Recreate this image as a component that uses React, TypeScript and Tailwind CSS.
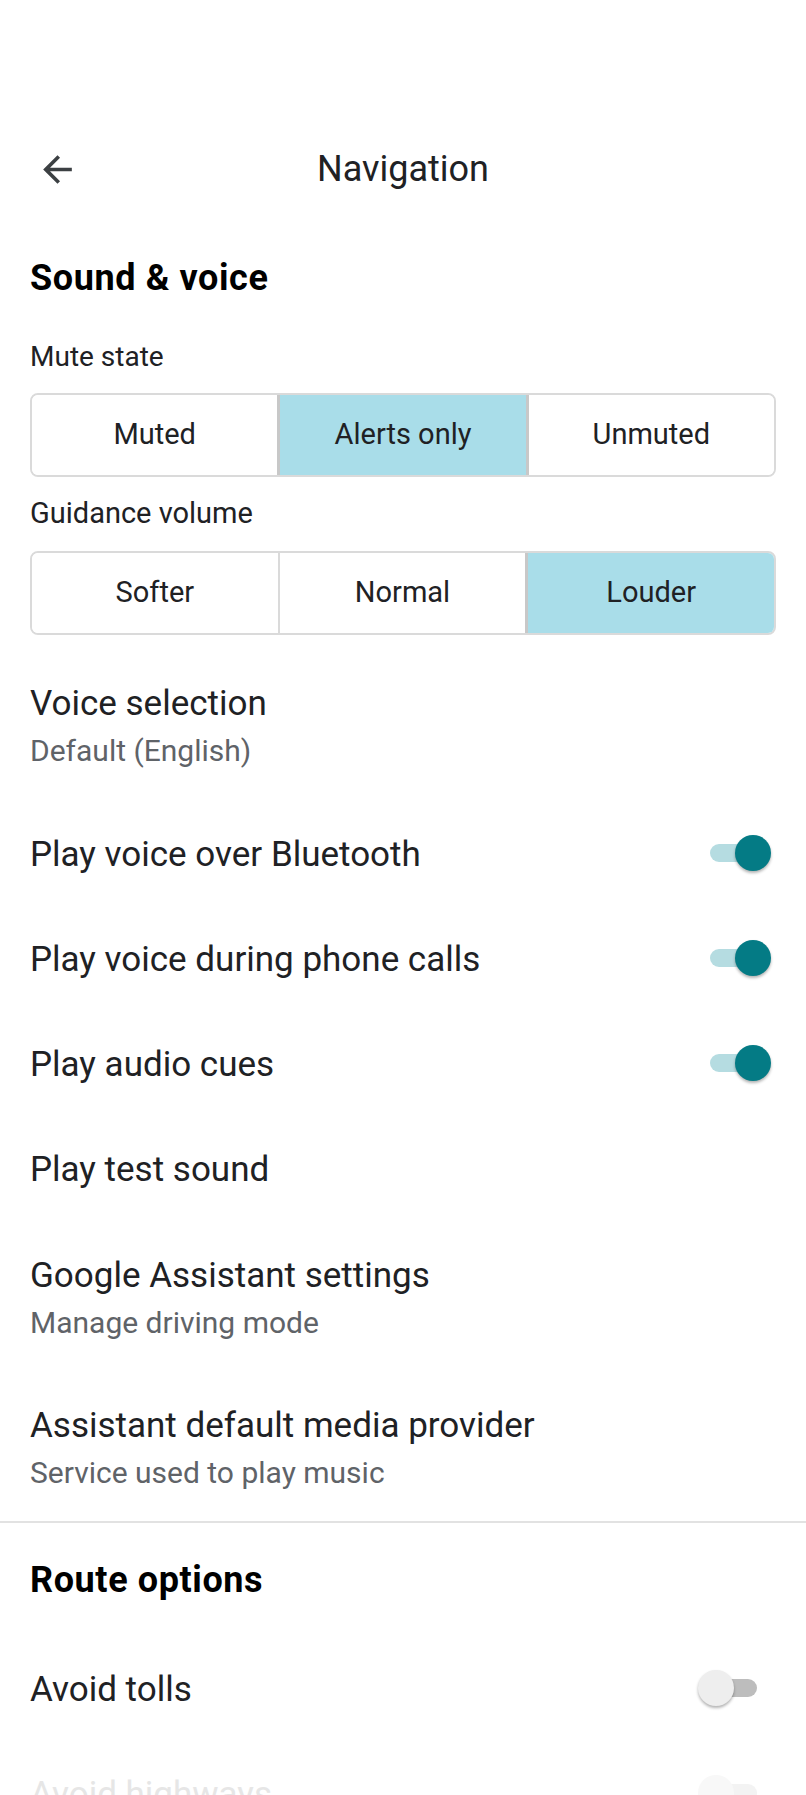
import React from "react";

const font = "font-['Roboto','Liberation_Sans',sans-serif]";

function BackArrow() {
  return (
    <svg width="43" height="43" viewBox="0 0 24 24" fill="#3c4043">
      <path d="M20 11H7.83l5.59-5.59L12 4l-8 8 8 8 1.41-1.41L7.83 13H20v-2z" />
    </svg>
  );
}

function Toggle({ on, faded = false }: { on: boolean; faded?: boolean }) {
  const track = faded ? "bg-[#f3f3f3]" : on ? "bg-[#b5dce1]" : "bg-[#bdbdbd]";
  const thumb = faded
    ? "bg-[#f8f8f8]"
    : on
      ? "bg-[#047b85] shadow-[0_2px_3px_rgba(0,0,0,0.3)]"
      : "bg-[#eeeeee] shadow-[0_2px_3px_rgba(0,0,0,0.3)]";
  return (
    <div className="relative h-[36px] w-[74px] shrink-0">
      <div className={`absolute left-[12px] top-[9px] h-[18px] w-[47px] rounded-full ${track}`} />
      <div className={`absolute top-0 h-[36px] w-[36px] rounded-full ${thumb} ${on ? "left-[37px]" : "left-0"}`} />
    </div>
  );
}

function Segmented({ items, selected }: { items: string[]; selected: number }) {
  return (
    <div className="mx-[30px] flex h-[84px] overflow-hidden rounded-[8px] border-2 border-[#dadada]">
      {items.map((label, i) => (
        <div
          key={label}
          className={`flex flex-1 items-center justify-center text-[29px] text-[#202124] ${
            i > 0 ? (i === selected || i - 1 === selected ? "border-l-[3px] border-[#c8c8c8]" : "border-l-2 border-[#dadada]") : ""
          } ${i === selected ? "bg-[#a9dde9]" : "bg-white"}`}
        >
          {label}
        </div>
      ))}
    </div>
  );
}

function ToggleRow({ label, on }: { label: string; on: boolean }) {
  return (
    <div className="flex h-[105px] items-center justify-between pl-[30px] pr-[34px]">
      <span className="mt-[6px] text-[35px] text-[#202124]">{label}</span>
      <Toggle on={on} />
    </div>
  );
}

function TwoLine({ title, sub, pt, pb }: { title: string; sub: string; pt: string; pb: string }) {
  return (
    <div className={`px-[30px] ${pt} ${pb}`}>
      <div className="text-[35px] leading-[44px] text-[#202124]">{title}</div>
      <div className="mt-[3px] text-[30px] leading-[44px] text-[#5f6368]">{sub}</div>
    </div>
  );
}

export default function App() {
  return (
    <div className={`h-[1795px] w-[806px] overflow-hidden bg-white ${font}`}>
      <div className="h-[112px]" />

      {/* Toolbar */}
      <div className="grid h-[114px] grid-cols-[1fr_auto_1fr] items-center">
        <div className="pl-[36px]">
          <BackArrow />
        </div>
        <div className="text-[36px] text-[#202124]">Navigation</div>
        <div />
      </div>

      {/* Sound & voice */}
      <div className="flex h-[102px] items-center px-[30px] pt-[2px] text-[36px] font-bold tracking-[0.6px] text-black">
        Sound &amp; voice
      </div>

      <div className="flex h-[58px] items-center px-[30px] text-[28px] text-[#202124]">Mute state</div>
      <div className="mt-[7px]">
        <Segmented items={["Muted", "Alerts only", "Unmuted"]} selected={1} />
      </div>

      <div className="flex h-[74px] items-center px-[30px] text-[29px] text-[#202124]">Guidance volume</div>
      <Segmented items={["Softer", "Normal", "Louder"]} selected={2} />

      <TwoLine title="Voice selection" sub="Default (English)" pt="pt-[47px]" pb="pb-[27px]" />

      <ToggleRow label="Play voice over Bluetooth" on />
      <ToggleRow label="Play voice during phone calls" on />
      <ToggleRow label="Play audio cues" on />
      <div className="flex h-[105px] items-center px-[30px] pt-[6px] text-[35px] text-[#202124]">Play test sound</div>

      <TwoLine title="Google Assistant settings" sub="Manage driving mode" pt="pt-[34px]" pb="pb-[27px]" />
      <TwoLine title="Assistant default media provider" sub="Service used to play music" pt="pt-[32px]" pb="pb-[26px]" />

      <div className="h-[2px] bg-[#e2e2e2]" />

      {/* Route options */}
      <div className="flex h-[112px] items-center px-[30px] pt-[2px] text-[36px] font-bold tracking-[0.6px] text-black">
        Route options
      </div>
      <ToggleRow label="Avoid tolls" on={false} />
      <div className="flex h-[105px] items-center justify-between pl-[30px] pr-[34px]">
        <span className="mt-[6px] text-[35px] text-[#e6e6e6]">Avoid highways</span>
        <Toggle on={false} faded />
      </div>
    </div>
  );
}
